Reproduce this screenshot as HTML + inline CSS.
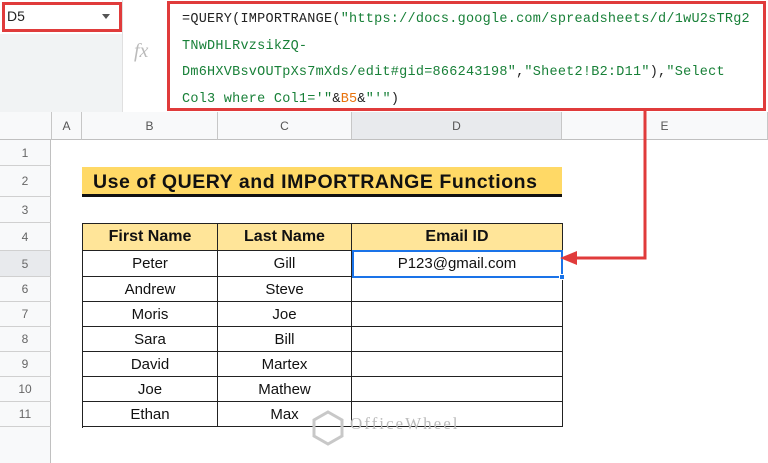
<!DOCTYPE html>
<html><head><meta charset="utf-8"><style>
*{margin:0;padding:0;box-sizing:border-box}
body{width:768px;height:463px;overflow:hidden;background:#fff;font-family:"Liberation Sans",Arial,sans-serif;position:relative}
.abs{position:absolute}
.mono{font-family:"Liberation Mono",monospace;font-size:13.5px;letter-spacing:0.25px;color:#222;white-space:pre}
.g{color:#188038}.o{color:#e8710a}
.rh{position:absolute;left:0;width:51px;background:#f8f9fa;border-right:1px solid #c0c0c0;border-bottom:1px solid #d0d0d0;color:#666;font-size:12px;text-align:center}
.ch{position:absolute;top:112px;height:28px;background:#f8f9fa;border-right:1px solid #c7c7c7;border-bottom:1px solid #c0c0c0;color:#555;font-size:12px;text-align:center;line-height:28px}
.c{position:absolute;text-align:center;font-size:15px;color:#111;border-right:1.5px solid #222;border-bottom:1.5px solid #222}
</style></head><body>
<div class="abs" style="left:0;top:0;width:768px;height:112px;background:#fff"></div>
<div class="abs" style="left:0;top:34px;width:122px;height:78px;background:#f1f3f4"></div>
<div class="abs" style="left:122px;top:0;width:1px;height:112px;background:#e0e0e0"></div>
<div class="abs" style="left:2px;top:2px;width:120px;height:30px;border:3px solid #e03b3b"></div>
<div class="abs" style="left:7px;top:8px;font-size:14px;color:#222">D5</div>
<div class="abs" style="left:102px;top:14px;width:0;height:0;border-left:4px solid transparent;border-right:4px solid transparent;border-top:5px solid #555"></div>
<div class="abs" style="left:134px;top:40px;font-family:'Liberation Serif',serif;font-style:italic;font-size:20px;color:#bbb">fx</div>
<div class="abs" style="left:167px;top:1px;width:599px;height:110px;border:3px solid #e03b3b"></div>
<div class="abs mono" style="left:182px;top:7px;line-height:26.5px">=QUERY(IMPORTRANGE(<span class="g">"https://docs.google.com/spreadsheets/d/1wU2sTRg2
TNwDHLRvzsikZQ-
Dm6HXVBsvOUTpXs7mXds/edit#gid=866243198"</span>,<span class="g">"Sheet2!B2:D11"</span>),<span class="g">"Select
Col3 where Col1='"</span>&amp;<span class="o">B5</span>&amp;<span class="g">"'"</span>)</div>
<div class="ch" style="left:0;width:52px"></div>
<div class="ch" style="left:52px;width:30px">A</div>
<div class="ch" style="left:82px;width:136px">B</div>
<div class="ch" style="left:218px;width:134px">C</div>
<div class="ch" style="left:352px;width:210px;background:#e8eaed">D</div>
<div class="ch" style="left:562px;width:206px">E</div>
<div class="rh" style="top:140px;height:26px;line-height:26px">1</div>
<div class="rh" style="top:166px;height:31px;line-height:31px">2</div>
<div class="rh" style="top:197px;height:26px;line-height:26px">3</div>
<div class="rh" style="top:223px;height:28px;line-height:28px">4</div>
<div class="rh" style="top:251px;height:26px;line-height:26px;background:#e8eaed">5</div>
<div class="rh" style="top:277px;height:25px;line-height:25px">6</div>
<div class="rh" style="top:302px;height:25px;line-height:25px">7</div>
<div class="rh" style="top:327px;height:25px;line-height:25px">8</div>
<div class="rh" style="top:352px;height:25px;line-height:25px">9</div>
<div class="rh" style="top:377px;height:25px;line-height:25px">10</div>
<div class="rh" style="top:402px;height:25px;line-height:25px">11</div>
<div class="rh" style="top:427px;height:36px;border-bottom:none"></div>
<div class="abs" style="left:82px;top:167px;width:480px;height:30px;background:#ffd966;border-bottom:3px solid #111;font-weight:bold;font-size:19.5px;letter-spacing:0.55px;line-height:30px;padding-left:11px;color:#111">Use of QUERY and IMPORTRANGE Functions</div>
<div class="abs" style="left:82px;top:223px;width:481px;height:205px;border-left:1.5px solid #222;border-top:1.5px solid #222"></div>
<div class="c" style="left:83px;top:224px;width:135px;height:27px;line-height:26px;background:#ffe599;font-weight:bold;font-size:16px">First Name</div>
<div class="c" style="left:218px;top:224px;width:134px;height:27px;line-height:26px;background:#ffe599;font-weight:bold;font-size:16px">Last Name</div>
<div class="c" style="left:352px;top:224px;width:211px;height:27px;line-height:26px;background:#ffe599;font-weight:bold;font-size:16px">Email ID</div>
<div class="c" style="left:83px;top:251px;width:135px;height:26px;line-height:26px">Peter</div>
<div class="c" style="left:218px;top:251px;width:134px;height:26px;line-height:26px">Gill</div>
<div class="c" style="left:352px;top:251px;width:211px;height:26px;line-height:26px">P123@gmail.com</div>
<div class="c" style="left:83px;top:277px;width:135px;height:25px;line-height:25px">Andrew</div>
<div class="c" style="left:218px;top:277px;width:134px;height:25px;line-height:25px">Steve</div>
<div class="c" style="left:352px;top:277px;width:211px;height:25px"></div>
<div class="c" style="left:83px;top:302px;width:135px;height:25px;line-height:25px">Moris</div>
<div class="c" style="left:218px;top:302px;width:134px;height:25px;line-height:25px">Joe</div>
<div class="c" style="left:352px;top:302px;width:211px;height:25px"></div>
<div class="c" style="left:83px;top:327px;width:135px;height:25px;line-height:25px">Sara</div>
<div class="c" style="left:218px;top:327px;width:134px;height:25px;line-height:25px">Bill</div>
<div class="c" style="left:352px;top:327px;width:211px;height:25px"></div>
<div class="c" style="left:83px;top:352px;width:135px;height:25px;line-height:25px">David</div>
<div class="c" style="left:218px;top:352px;width:134px;height:25px;line-height:25px">Martex</div>
<div class="c" style="left:352px;top:352px;width:211px;height:25px"></div>
<div class="c" style="left:83px;top:377px;width:135px;height:25px;line-height:25px">Joe</div>
<div class="c" style="left:218px;top:377px;width:134px;height:25px;line-height:25px">Mathew</div>
<div class="c" style="left:352px;top:377px;width:211px;height:25px"></div>
<div class="c" style="left:83px;top:402px;width:135px;height:25px;line-height:25px">Ethan</div>
<div class="c" style="left:218px;top:402px;width:134px;height:25px;line-height:25px">Max</div>
<div class="c" style="left:352px;top:402px;width:211px;height:25px"></div>
<div class="abs" style="left:352px;top:250px;width:211px;height:28px;border:2px solid #1a73e8"></div>
<div class="abs" style="left:559px;top:274px;width:6px;height:6px;background:#1a73e8;border:1px solid #fff"></div>
<svg class="abs" style="left:0;top:0" width="768" height="463">
<polyline points="645,110 645,258 570,258" fill="none" stroke="#e03b3b" stroke-width="3"/>
<polygon points="560,258 577,251 577,265" fill="#e03b3b"/>
<polygon points="328,412 342,420 342,436 328,444 314,436 314,420" fill="none" stroke="#c8c8c8" stroke-width="3"/>
</svg>
<div class="abs" style="left:350px;top:414px;font-family:'Liberation Serif',serif;font-size:17px;letter-spacing:2px;color:#bbb">OfficeWheel</div>
</body></html>
